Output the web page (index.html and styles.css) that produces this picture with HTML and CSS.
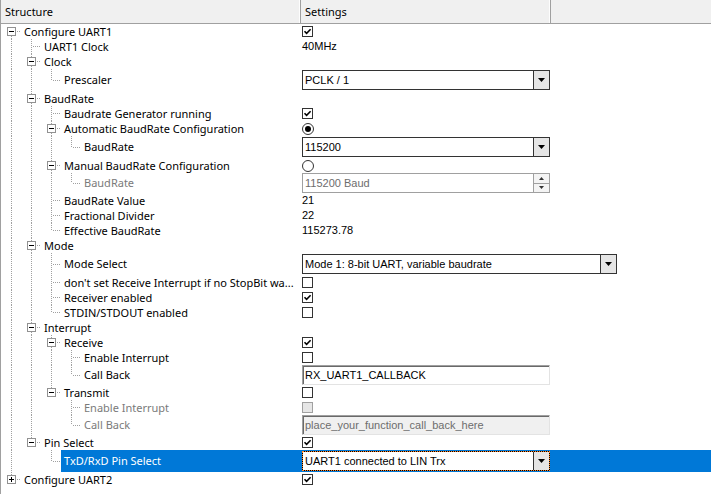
FILE: index.html
```html
<!DOCTYPE html>
<html>

<head>
    <link rel="stylesheet" href="styles.css">
</head>

<body>
    <div class="grid">
        <div class="head">
            <div class="hc hc-tree">Structure</div>
            <div class="hc hc-set">Settings</div>
            <div class="hc hc-rest"></div>
        </div>

        <div class="row">
            <div class="tree"><span class="col f"><span class="box"></span></span><span class="label">Configure UART1</span></div>
            <div class="set"><span class="chk"><svg viewBox="0 0 9 9"><path d="M1.5 4.2 3.6 6.3 7.6 2.3"/></svg></span></div>
        </div>
        <div class="row">
            <div class="tree"><span class="col v"></span><span class="col t"></span><span class="label">UART1 Clock</span></div>
            <div class="set">40MHz</div>
        </div>
        <div class="row">
            <div class="tree"><span class="col v"></span><span class="col t"><span class="box"></span></span><span class="label">Clock</span></div>
            <div class="set"></div>
        </div>
        <div class="row tall">
            <div class="tree"><span class="col v"></span><span class="col v"></span><span class="col l"></span><span class="label">Prescaler</span></div>
            <div class="set">
                <div class="combo"><span class="val">PCLK / 1</span><span class="btn"><svg viewBox="0 0 7 4"><path d="M0 0h7L3.5 4z"/></svg></span></div>
            </div>
        </div>
        <div class="row">
            <div class="tree"><span class="col v"></span><span class="col t"><span class="box"></span></span><span class="label">BaudRate</span></div>
            <div class="set"></div>
        </div>
        <div class="row">
            <div class="tree"><span class="col v"></span><span class="col v"></span><span class="col t"></span><span class="label">Baudrate Generator running</span></div>
            <div class="set"><span class="chk"><svg viewBox="0 0 9 9"><path d="M1.5 4.2 3.6 6.3 7.6 2.3"/></svg></span></div>
        </div>
        <div class="row">
            <div class="tree"><span class="col v"></span><span class="col v"></span><span class="col t"><span class="box"></span></span><span class="label">Automatic BaudRate Configuration</span></div>
            <div class="set"><span class="radio on"></span></div>
        </div>
        <div class="row tall">
            <div class="tree"><span class="col v"></span><span class="col v"></span><span class="col v"></span><span class="col l"></span><span class="label">BaudRate</span></div>
            <div class="set">
                <div class="combo"><span class="val">115200</span><span class="btn"><svg viewBox="0 0 7 4"><path d="M0 0h7L3.5 4z"/></svg></span></div>
            </div>
        </div>
        <div class="row">
            <div class="tree"><span class="col v"></span><span class="col v"></span><span class="col t"><span class="box"></span></span><span class="label">Manual BaudRate Configuration</span></div>
            <div class="set"><span class="radio"></span></div>
        </div>
        <div class="row edit">
            <div class="tree"><span class="col v"></span><span class="col v"></span><span class="col v"></span><span class="col l"></span><span class="label off">BaudRate</span></div>
            <div class="set">
                <div class="spin"><span class="val">115200 Baud</span>
                    <span class="arrows">
                        <span><svg viewBox="0 0 5 3"><path d="M0 3h5L2.5 0z"/></svg></span>
                        <span><svg viewBox="0 0 5 3"><path d="M0 0h5L2.5 3z"/></svg></span>
                    </span>
                </div>
            </div>
        </div>
        <div class="row">
            <div class="tree"><span class="col v"></span><span class="col v"></span><span class="col t"></span><span class="label">BaudRate Value</span></div>
            <div class="set">21</div>
        </div>
        <div class="row">
            <div class="tree"><span class="col v"></span><span class="col v"></span><span class="col t"></span><span class="label">Fractional Divider</span></div>
            <div class="set">22</div>
        </div>
        <div class="row">
            <div class="tree"><span class="col v"></span><span class="col v"></span><span class="col l"></span><span class="label">Effective BaudRate</span></div>
            <div class="set">115273.78</div>
        </div>
        <div class="row">
            <div class="tree"><span class="col v"></span><span class="col t"><span class="box"></span></span><span class="label">Mode</span></div>
            <div class="set"></div>
        </div>
        <div class="row tall">
            <div class="tree"><span class="col v"></span><span class="col v"></span><span class="col t"></span><span class="label">Mode Select</span></div>
            <div class="set">
                <div class="combo wide"><span class="val">Mode 1: 8-bit UART, variable baudrate</span><span class="btn"><svg viewBox="0 0 7 4"><path d="M0 0h7L3.5 4z"/></svg></span></div>
            </div>
        </div>
        <div class="row">
            <div class="tree"><span class="col v"></span><span class="col v"></span><span class="col t"></span><span class="label">don't set Receive Interrupt if no StopBit wa...</span></div>
            <div class="set"><span class="chk"></span></div>
        </div>
        <div class="row">
            <div class="tree"><span class="col v"></span><span class="col v"></span><span class="col t"></span><span class="label">Receiver enabled</span></div>
            <div class="set"><span class="chk"><svg viewBox="0 0 9 9"><path d="M1.5 4.2 3.6 6.3 7.6 2.3"/></svg></span></div>
        </div>
        <div class="row">
            <div class="tree"><span class="col v"></span><span class="col v"></span><span class="col l"></span><span class="label">STDIN/STDOUT enabled</span></div>
            <div class="set"><span class="chk"></span></div>
        </div>
        <div class="row">
            <div class="tree"><span class="col v"></span><span class="col t"><span class="box"></span></span><span class="label">Interrupt</span></div>
            <div class="set"></div>
        </div>
        <div class="row">
            <div class="tree"><span class="col v"></span><span class="col v"></span><span class="col t"><span class="box"></span></span><span class="label">Receive</span></div>
            <div class="set"><span class="chk"><svg viewBox="0 0 9 9"><path d="M1.5 4.2 3.6 6.3 7.6 2.3"/></svg></span></div>
        </div>
        <div class="row">
            <div class="tree"><span class="col v"></span><span class="col v"></span><span class="col v"></span><span class="col t"></span><span class="label">Enable Interrupt</span></div>
            <div class="set"><span class="chk"></span></div>
        </div>
        <div class="row edit">
            <div class="tree"><span class="col v"></span><span class="col v"></span><span class="col v"></span><span class="col l"></span><span class="label">Call Back</span></div>
            <div class="set"><div class="field">RX_UART1_CALLBACK</div></div>
        </div>
        <div class="row">
            <div class="tree"><span class="col v"></span><span class="col v"></span><span class="col l"><span class="box"></span></span><span class="label">Transmit</span></div>
            <div class="set"><span class="chk"></span></div>
        </div>
        <div class="row">
            <div class="tree"><span class="col v"></span><span class="col v"></span><span class="col"></span><span class="col t"></span><span class="label off">Enable Interrupt</span></div>
            <div class="set"><span class="chk dis"></span></div>
        </div>
        <div class="row edit">
            <div class="tree"><span class="col v"></span><span class="col v"></span><span class="col"></span><span class="col l"></span><span class="label off">Call Back</span></div>
            <div class="set"><div class="field dis">place_your_function_call_back_here</div></div>
        </div>
        <div class="row">
            <div class="tree"><span class="col v"></span><span class="col l"><span class="box"></span></span><span class="label">Pin Select</span></div>
            <div class="set"><span class="chk"><svg viewBox="0 0 9 9"><path d="M1.5 4.2 3.6 6.3 7.6 2.3"/></svg></span></div>
        </div>
        <div class="row tall sel">
            <div class="tree"><span class="col v"></span><span class="col"></span><span class="col l"></span><span class="label">TxD/RxD Pin Select</span></div>
            <div class="set">
                <div class="combo focus"><span class="val">UART1 connected to LIN Trx</span><span class="btn"><svg viewBox="0 0 7 4"><path d="M0 0h7L3.5 4z"/></svg></span></div>
            </div>
        </div>
        <div class="row">
            <div class="tree"><span class="col l"><span class="box plus"></span></span><span class="label">Configure UART2</span></div>
            <div class="set"><span class="chk"><svg viewBox="0 0 9 9"><path d="M1.5 4.2 3.6 6.3 7.6 2.3"/></svg></span></div>
        </div>
    </div>
</body>

</html>
```

FILE: styles.css
```css
* {
    padding: 0;
    margin: 0;
    box-sizing: border-box;
}

body {
    background: #fff;
    color: #000;
    font-family: "Noto Sans", sans-serif;
    font-size: 11px;
}

.grid {
    height: 100vh;
    border-left: 1px solid #a0a0a0;
    overflow: hidden;
}

/* header */
.head {
    display: flex;
    height: 24px;
    background: #f0f0f0;
    border-bottom: 1px solid #a0a0a0;
}

.hc {
    flex: none;
    line-height: 23px;
    padding-left: 4px;
    border-right: 1px solid #a0a0a0;
    box-shadow: inset -1px 0 #fdfdfd;
}

.hc-tree {
    width: 300px;
}

.hc-set {
    width: 250px;
}

.hc-rest {
    flex: 1;
    border-right: 0;
    box-shadow: none;
}

/* rows */
.row {
    display: flex;
    height: 15px;
    line-height: 15px;
}

.row.tall {
    height: 22px;
    line-height: 22px;
}

.row.edit {
    height: 20px;
    line-height: 20px;
}

.tree {
    width: 300px;
    flex: none;
    display: flex;
}

.label {
    flex: 1;
    min-width: 0;
    padding-left: 3px;
    white-space: nowrap;
}

.label.off {
    color: #7a7a7a;
}

.row.sel .label,
.row.sel .set {
    background: #0078d7;
    color: #fff;
}

/* tree guide lines */
.col {
    width: 20px;
    flex: none;
    display: flex;
    align-items: center;
    background-repeat: no-repeat;
}

.col.v {
    background-image: repeating-linear-gradient(#a0a0a0 0 1px, transparent 1px 2px);
    background-size: 1px 100%;
    background-position: 10px 0;
}

.col.t {
    background-image: repeating-linear-gradient(#a0a0a0 0 1px, transparent 1px 2px),
        repeating-linear-gradient(to right, #a0a0a0 0 1px, transparent 1px 2px);
    background-size: 1px 100%, 10px 1px;
    background-position: 10px 0, 12px 50%;
}

.col.l {
    background-image: repeating-linear-gradient(#a0a0a0 0 1px, transparent 1px 2px),
        repeating-linear-gradient(to right, #a0a0a0 0 1px, transparent 1px 2px);
    background-size: 1px 50%, 10px 1px;
    background-position: 10px 0, 12px 50%;
}

.col.f {
    background-image: repeating-linear-gradient(#a0a0a0 0 1px, transparent 1px 2px),
        repeating-linear-gradient(to right, #a0a0a0 0 1px, transparent 1px 2px);
    background-size: 1px 50%, 10px 1px;
    background-position: 10px 100%, 12px 50%;
}

.box {
    position: relative;
    width: 9px;
    height: 9px;
    margin-left: 6px;
    border: 1px solid #919191;
    background: #fff;
}

.box::before {
    content: "";
    position: absolute;
    left: 1px;
    top: 3px;
    width: 5px;
    height: 1px;
    background: #000;
}

.box.plus::after {
    content: "";
    position: absolute;
    left: 3px;
    top: 1px;
    width: 1px;
    height: 5px;
    background: #000;
}

/* settings column */
.set {
    flex: 1;
    display: flex;
    align-items: center;
    padding-left: 1px;
    font-family: "Liberation Sans", Arial, sans-serif;
    font-size: 11px;
    white-space: nowrap;
}

.chk {
    width: 11px;
    height: 11px;
    border: 1px solid #333;
    background: #fff;
    display: flex;
}

.chk svg {
    width: 9px;
    height: 9px;
    fill: none;
    stroke: #000;
    stroke-width: 1.6;
}

.chk.dis {
    background: #e6e6e6;
    border-color: #a0a0a0;
}

.radio {
    width: 12px;
    height: 12px;
    border: 1px solid #333;
    border-radius: 50%;
    background: #fff;
    display: flex;
    align-items: center;
    justify-content: center;
}

.radio.on::before {
    content: "";
    width: 6px;
    height: 6px;
    border-radius: 50%;
    background: #000;
}

.combo {
    width: 248px;
    height: 20px;
    border: 1px solid #333;
    background: #fff;
    color: #000;
    display: flex;
    line-height: 18px;
}

.combo.wide {
    width: 315px;
}

.combo.focus {
    border: 1px dotted #ff8728;
    background: linear-gradient(#fff, #fff) padding-box, #000 border-box;
}

.val {
    flex: 1;
    padding-left: 2px;
    overflow: hidden;
}

.btn {
    width: 16px;
    border-left: 1px solid #333;
    background: #e5e5e5;
    display: flex;
    align-items: center;
    justify-content: center;
}

.btn svg {
    width: 7px;
    height: 4px;
    fill: #000;
}

.spin {
    width: 248px;
    height: 20px;
    border: 1px solid #a0a0a0;
    background: #fff;
    color: #6d6d6d;
    display: flex;
    line-height: 18px;
}

.arrows {
    width: 16px;
    border-left: 1px solid #a0a0a0;
    display: flex;
    flex-direction: column;
}

.arrows span {
    flex: 1;
    display: flex;
    align-items: center;
    justify-content: center;
    background: #f4f4f4;
}

.arrows span + span {
    border-top: 1px solid #a0a0a0;
}

.arrows svg {
    width: 5px;
    height: 3px;
    fill: #333;
}

.field {
    width: 248px;
    height: 20px;
    line-height: 18px;
    padding-left: 2px;
    border: 1px solid #e3e3e3;
    border-top-color: #a0a0a0;
    border-left-color: #a0a0a0;
    box-shadow: inset 1px 1px #696969;
    background: #fff;
}

.field.dis {
    background: #f0f0f0;
    color: #6d6d6d;
}
```
